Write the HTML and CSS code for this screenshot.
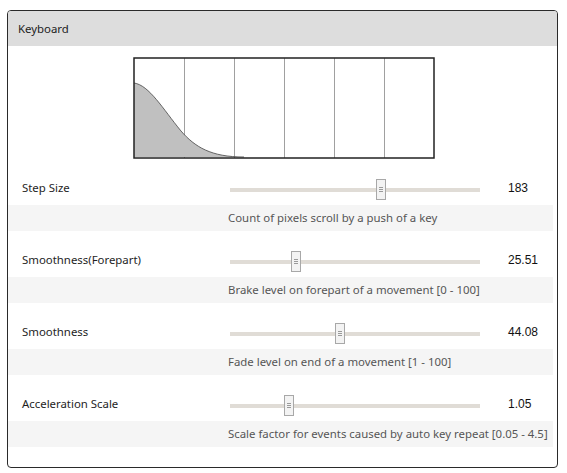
FILE: index.html
```html
<!DOCTYPE html>
<html>
<head>
<meta charset="utf-8">
<link rel="stylesheet" href="styles.css">
</head>
<body>
<div class="panel">
  <div class="header">Keyboard</div>
  <div class="chart-wrap">
    <svg class="chart" width="302" height="102" viewBox="0 0 302 102">
      <g stroke="#a0a0a0" stroke-width="1">
        <line x1="51.5" y1="1" x2="51.5" y2="101"/>
        <line x1="101.5" y1="1" x2="101.5" y2="101"/>
        <line x1="151.5" y1="1" x2="151.5" y2="101"/>
        <line x1="201.5" y1="1" x2="201.5" y2="101"/>
        <line x1="251.5" y1="1" x2="251.5" y2="101"/>
      </g>
      <path d="M1,26 C16,28 30,52 48,74 C62,90 78,100 111,100 L1,100 Z" fill="#c0c0c0" stroke="none"/>
      <path d="M1,26 C16,28 30,52 48,74 C62,90 78,100 111,100" fill="none" stroke="#444" stroke-width="0.8"/>
      <rect x="1" y="1" width="300" height="100" fill="none" stroke="#222" stroke-width="1.5"/>
    </svg>
  </div>

  <div class="setting">
    <div class="main">
      <span class="label">Step Size</span>
      <div class="slider"><div class="track"></div><div class="thumb" style="left:146px"><i></i></div></div>
      <span class="value">183</span>
    </div>
    <div class="desc">Count of pixels scroll by a push of a key</div>
  </div>

  <div class="setting">
    <div class="main">
      <span class="label">Smoothness(Forepart)</span>
      <div class="slider"><div class="track"></div><div class="thumb" style="left:61px"><i></i></div></div>
      <span class="value">25.51</span>
    </div>
    <div class="desc">Brake level on forepart of a movement [0 - 100]</div>
  </div>

  <div class="setting">
    <div class="main">
      <span class="label">Smoothness</span>
      <div class="slider"><div class="track"></div><div class="thumb" style="left:105px"><i></i></div></div>
      <span class="value">44.08</span>
    </div>
    <div class="desc">Fade level on end of a movement [1 - 100]</div>
  </div>

  <div class="setting">
    <div class="main">
      <span class="label">Acceleration Scale</span>
      <div class="slider"><div class="track"></div><div class="thumb" style="left:54px"><i></i></div></div>
      <span class="value">1.05</span>
    </div>
    <div class="desc">Scale factor for events caused by auto key repeat [0.05 - 4.5]</div>
  </div>
</div>
</body>
</html>
```

FILE: styles.css
```css
html, body {
  margin: 0;
  padding: 0;
  background: #ffffff;
}
body {
  font-family: "Noto Sans", "Open Sans", sans-serif;
  font-size: 11.4px;
  color: #1e1e1e;
}
.panel {
  margin: 10px 0 0 7px;
  width: 549px;
  height: 456px;
  border: 1px solid #2a2a2a;
  border-radius: 4px;
  overflow: hidden;
  box-sizing: content-box;
}
.header {
  height: 35px;
  background: #dddddd;
  padding-left: 10px;
  display: flex;
  align-items: center;
  line-height: 1;
  color: #222;
}
.chart-wrap {
  padding: 11px 0 0 125px;
  height: 102px;
}
.chart {
  display: block;
}
.setting {
  display: flex;
  flex-direction: column;
  margin-right: 4px;
}
.main {
  height: 46px;
  display: grid;
  grid-template-columns: 208px 250px 28px auto;
  align-items: center;
  padding-left: 14px;
  padding-top: 16px;
  box-sizing: border-box;
  white-space: nowrap;
}
.label {
  grid-column: 1;
  line-height: 1;
  margin-top: -4px;
}
.slider {
  grid-column: 2;
  position: relative;
  height: 22px;
}
.track {
  position: absolute;
  left: 0;
  right: 0;
  top: 9px;
  height: 4px;
  background: #e0dcd6;
}
.thumb {
  position: absolute;
  top: 0;
  width: 8px;
  height: 19px;
  border: 1px solid #a8a8a8;
  background: #f3f3f3;
  display: flex;
  align-items: center;
  justify-content: center;
}
.thumb i {
  display: block;
  width: 4px;
  height: 5px;
  border-top: 1px solid #9a9a9a;
  border-bottom: 1px solid #9a9a9a;
  background: linear-gradient(#9a9a9a, #9a9a9a) center / 4px 1px no-repeat;
  box-sizing: border-box;
}
.value {
  grid-column: 4;
  font-family: "Liberation Sans", Arial, sans-serif;
  font-size: 12px;
  color: #111;
  line-height: 1;
  margin-top: -5px;
}
.desc {
  height: 26px;
  background: #f5f5f5;
  padding-left: 220px;
  display: flex;
  align-items: center;
  color: #555555;
  line-height: 1;
  white-space: nowrap;
}
```
